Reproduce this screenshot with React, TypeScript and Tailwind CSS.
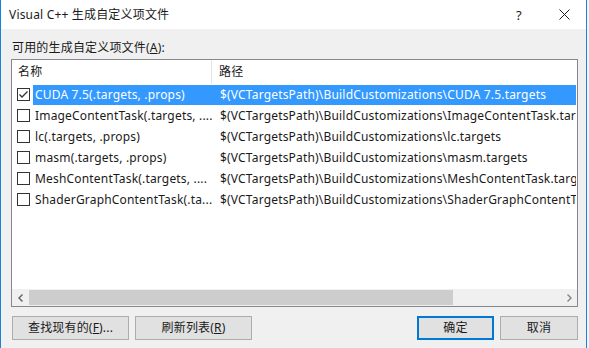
import React from "react";

interface Item {
    name: string
    path: string
    checked: boolean
}

const items: Item[] = [
    { name: "CUDA 7.5(.targets, .props)", path: "$(VCTargetsPath)\\BuildCustomizations\\CUDA 7.5.targets", checked: true },
    { name: "ImageContentTask(.targets, ....", path: "$(VCTargetsPath)\\BuildCustomizations\\ImageContentTask.targets", checked: false },
    { name: "lc(.targets, .props)", path: "$(VCTargetsPath)\\BuildCustomizations\\lc.targets", checked: false },
    { name: "masm(.targets, .props)", path: "$(VCTargetsPath)\\BuildCustomizations\\masm.targets", checked: false },
    { name: "MeshContentTask(.targets, ....", path: "$(VCTargetsPath)\\BuildCustomizations\\MeshContentTask.targets", checked: false },
    { name: "ShaderGraphContentTask(.ta...", path: "$(VCTargetsPath)\\BuildCustomizations\\ShaderGraphContentTask.targets", checked: false },
];

function CheckBox(props: { checked: boolean }) {
    return <div className="w-[13px] h-[13px] border border-[#333333] bg-white flex items-center justify-center shrink-0">
        {props.checked && (
            <svg width="11" height="11" viewBox="0 0 11 11">
                <path d="M1.5 5.5 L4 8 L9.5 2.5" fill="none" stroke="#333333" strokeWidth="1.3" />
            </svg>
        )}
    </div>
}

function Row(props: { item: Item, selected: boolean }) {
    const { item, selected } = props;
    return <div className="flex items-center h-[21px] whitespace-nowrap">
        <div className="w-[21px] pl-[5px] flex items-center shrink-0">
            <CheckBox checked={item.checked} />
        </div>
        <div className={`flex flex-1 min-w-0 h-[20px] items-center mr-[1px] ${selected ? "bg-[#3399ff] text-white" : "text-[#1a1a1a]"}`}>
            <div className="w-[180px] shrink-0 pl-[2px] overflow-hidden">{item.name}</div>
            <div className="flex-1 min-w-0 pl-[7px] overflow-hidden">{item.path}</div>
        </div>
    </div>
}

function Button(props: { children: React.ReactNode, width: string, focused?: boolean }) {
    return <div className={`${props.width} h-[24px] flex items-center justify-center bg-[#e1e1e1] text-[#1a1a1a] ${props.focused ? "border-2 border-[#0078d7]" : "border border-[#adadad]"}`}>
        {props.children}
    </div>
}

export default function App() {
    return <div className="w-[589px] h-[348px] bg-[#eef4fa] font-['Noto_Sans','Noto_Sans_CJK_SC',sans-serif] text-[12px] leading-[16px] tracking-[0.18px] overflow-hidden">
        <div className="w-[587px] h-full border-x border-[#1883d7] flex flex-col">

            {/* title bar */}
            <div className="h-[29px] bg-white flex items-center pl-[8px] text-[#1a1a1a] shrink-0">
                <span className="flex-1">Visual C++ 生成自定义项文件</span>
                <span className="w-[46px] text-center text-[13px]">?</span>
                <div className="w-[44px] flex justify-center">
                    <svg width="11" height="11" viewBox="0 0 11 11">
                        <path d="M0.5 0.5 L10.5 10.5 M10.5 0.5 L0.5 10.5" stroke="#1a1a1a" strokeWidth="1" />
                    </svg>
                </div>
            </div>

            <div className="flex-1 bg-[#f0f0f0] pl-[10px] pr-[8px] pt-[11px]">
                <div className="h-[19px] pl-[1px] text-[#1a1a1a]">
                    可用的生成自定义项文件(<span className="underline">A</span>):
                </div>

                {/* list */}
                <div className="h-[248px] border border-[#828790] bg-white flex flex-col">
                    <div className="flex h-[24px] text-[#1a1a1a] shrink-0">
                        <div className="w-[200px] pl-[6px] flex items-center border-r border-[#e5e5e5]">名称</div>
                        <div className="flex-1 pl-[7px] flex items-center">路径</div>
                    </div>
                    <div className="flex-1 overflow-hidden">
                        {items.map((item, i) => <Row item={item} selected={i == 0} key={item.name} />)}
                    </div>
                    {/* horizontal scroll bar */}
                    <div className="h-[17px] bg-[#f0f0f0] flex items-center shrink-0">
                        <div className="w-[17px] flex justify-center">
                            <svg width="6" height="8" viewBox="0 0 6 8">
                                <path d="M4.5 0.5 L1 4 L4.5 7.5" fill="none" stroke="#606060" strokeWidth="1.4" />
                            </svg>
                        </div>
                        <div className="w-[424px] h-[15px] bg-[#cdcdcd]"></div>
                        <div className="flex-1"></div>
                        <div className="w-[17px] flex justify-center">
                            <svg width="6" height="8" viewBox="0 0 6 8">
                                <path d="M1.5 0.5 L5 4 L1.5 7.5" fill="none" stroke="#858585" strokeWidth="1.4" />
                            </svg>
                        </div>
                    </div>
                </div>

                {/* buttons */}
                <div className="flex mt-[9px] gap-[6px] pl-[1px]">
                    <Button width="w-[117px]">查找现有的(<span className="underline">F</span>)...</Button>
                    <Button width="w-[117px]">刷新列表(<span className="underline">R</span>)</Button>
                    <div className="flex-1"></div>
                    <Button width="w-[77px]" focused>确定</Button>
                    <Button width="w-[78px]">取消</Button>
                </div>
            </div>
        </div>
    </div>
}
